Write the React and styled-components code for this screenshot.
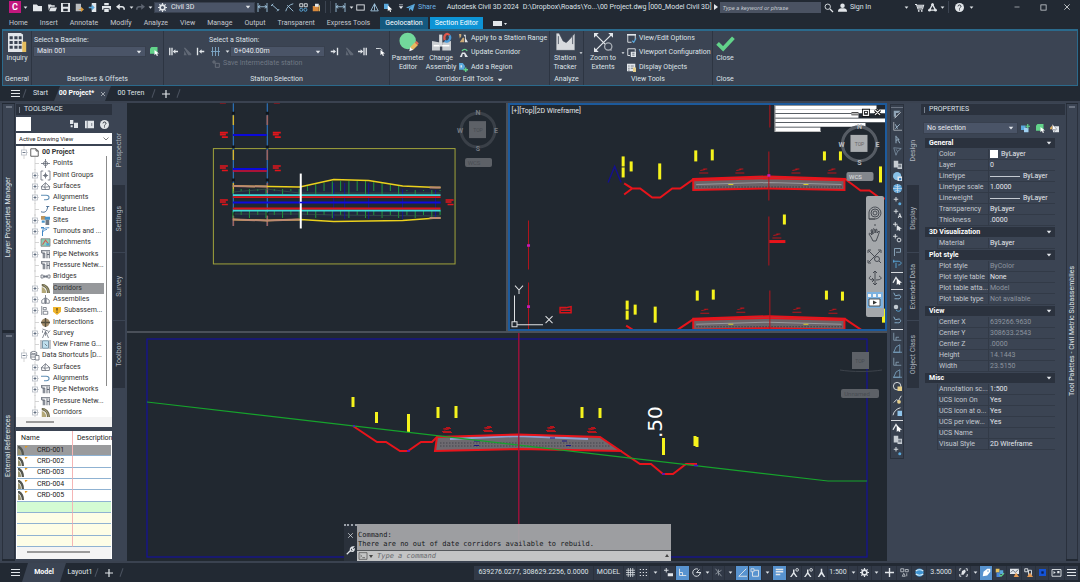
import styled, { createGlobalStyle, css } from "styled-components";
import { useState } from "react";

const GlobalStyle = createGlobalStyle`
  * { box-sizing: border-box; }
  body { margin: 0; background: #222933; overflow: hidden; }
  body, button, input, select, table {
    font-family: Roboto, "Open Sans", sans-serif;
    font-size: 7px;
    line-height: 9px;
    color: #dfe3e8;
  }
  button, input, select {
    border: 0;
    padding: 0;
    margin: 0;
    background: none;
    border-radius: 0;
  }
  select { appearance: none; }
`;

/* ---------- icons ---------- */

const Svg = styled.svg`
  display: block;
  flex: none;
  overflow: visible;
`;

const W = "#e2e6ea";
const B = "#5aa9dd";
const G = "#62d38a";
const D = "#5d6470";
const L = { fill: "none", stroke: W, strokeWidth: 1.2 };
const K = { fill: "none", stroke: D, strokeWidth: 1 };

const icons = {
  menu: <path d="M0 2h12M0 6h12M0 10h12" {...L} strokeWidth="1.6" />,
  plus: <path d="M6 0v12M0 6h12" {...L} strokeWidth="1.8" />,
  close: <path d="M2 2l8 8M10 2l-8 8" {...L} />,
  min: <path d="M1 6h10" {...L} />,
  max: <rect x="1.5" y="1.5" width="9" height="9" {...L} />,
  caret: <path d="M1.500 3.500h9L6 9z" fill={W} />,
  newFile: <path d="M0 2h5l2 2h5v7H0z" fill={W} />,
  open: <path d="M0 2h4l1 1h4v2H3L1 10zM3.5 6H12l-2 5H1.5z" fill={W} />,
  save: <path d="M0 0h12v12H0zM2.500 1v4h7V1zM3 7.500v3.500h6V7.500z" fill={W} fillRule="evenodd" />,
  saveAs: <><path d="M1 1h7v10H1z" fill="#b9bcbe" /><path d="M5 8h3V5l4 3.500L8 12V9H5z" fill="#d99b3c" /></>,
  exportDoc: <><path d="M5 0h6v12H5z" fill={W} /><path d="M1 5h4V2l4 4-4 4V7H1z" fill={B} /></>,
  print: <><path d="M3 0h6v3H3zM0 4h12v5h-2V7H2v2H0z" fill={W} /><path d="M3 8h6v4H3z" fill={W} /></>,
  undo: <><path d="M0 5l5-4v8z" fill={W} /><path d="M4 5h4c2 0 3 1 3 4" fill="none" stroke={W} strokeWidth="2" /></>,
  redo: <><path d="M12 5L7 1v8z" fill={D} /><path d="M8 5H4C2 5 1 6 1 9" fill="none" stroke={D} strokeWidth="2" /></>,
  gear: <><circle cx="6" cy="6" r="3.200" fill="none" stroke={W} strokeWidth="2.200" /><path d="M6 0v2.500M6 9.500V12M0 6h2.500M9.500 6H12M1.800 1.800l1.700 1.700M8.500 8.500l1.700 1.700M10.200 1.800L8.500 3.500M3.500 8.500l-1.700 1.700" stroke={W} strokeWidth="1.600" /></>,
  dimH: <path d="M0 0v12M12 0v12M0 5h12M3 3L0 5l3 2M9 3l3 2-3 2" {...L} stroke="#9fc4de" />,
  dimD: <path d="M1 2l9 8M0 4l3-3M8 11l3-3" {...L} stroke="#9fc4de" />,
  arc: <path d="M1 11C2 6 6 2 11 1M3 3l8 8" {...L} stroke="#9fc4de" />,
  link: <><path d="M1 1h4v4H1zM7 1h4v4H7z" {...L} stroke={W} /><circle cx="3" cy="9" r="2" {...L} stroke={B} /><circle cx="8.500" cy="9" r="2" {...L} stroke={B} /></>,
  pack: <><path d="M1 4h8v7H1z" fill="#d8893c" /><path d="M4 1h5v4H4z" fill={W} /><path d="M10 3v8" {...L} stroke="#e9c66a" /></>,
  rect: <rect x="1" y="2.500" width="10" height="7" {...L} />,
  warn: <path d="M6 1l5 9.500H1zM6 1v9" {...L} stroke="#9fc4de" />,
  pick: <><path d="M0 1h6v7H0z" fill={B} /><path d="M5 3v8l2-2 1 3 1.500-.5-1-3H11z" fill="#fff" /></>,
  caretBar: <><path d="M2 1.500h8" {...L} /><path d="M1.500 4.500h9L6 10z" fill={W} /></>,
  plane: <path d="M0 6l12-5-3 10-3-3-2 3V7l5-4-6 4z" fill={B} />,
  search: <><circle cx="5" cy="5" r="3.600" {...L} /><path d="M8 8l4 4" {...L} strokeWidth="1.600" /></>,
  person: <><circle cx="6" cy="3.500" r="3" fill={W} /><path d="M0 11.500c0-4 3-4.500 6-4.500s6 .5 6 4.500z" fill={W} /></>,
  cart: <><path d="M0 2h2l2 6h6l1.500-5H3" fill="none" stroke={W} strokeWidth="1.400" /><path d="M3 3h8l-1 4H4z" fill="#b8bcc2" /><circle cx="5" cy="10.500" r="1.200" fill={W} /><circle cx="9" cy="10.500" r="1.200" fill={W} /></>,
  appStore: <><path d="M6 2L2 9.500h8z" fill="none" stroke={W} strokeWidth="1.800" /><circle cx="6" cy="2" r="1.800" fill={W} /><circle cx="2" cy="9.500" r="1.800" fill={W} /><circle cx="10" cy="9.500" r="1.800" fill={W} /></>,
  help: <><circle cx="6" cy="6" r="6" fill={W} /><path d="M4 4.500C4 2 8 2 8 4.500 8 6 6 6 6 7.500M6 8.500V10" fill="none" stroke="#222933" strokeWidth="1.200" /></>,
  inquiry: <><path d="M0 0h8l1.500 1v11H0z" fill={W} /><path d="M1 2h2v2H1zM4 2h2v2H4zM6.800 2h1.800v2H6.800zM1 5h2v2H1zM4 5h2v2H4zM6.800 5h1.800v2H6.800zM1 8h2v2H1zM4 8h2v2H4zM6.800 8h1.800v2H6.800z" fill="#3b4453" /><path d="M9 5.500h2.500V12H9z" fill="#e6bd5c" /></>,
  greenPick: <><path d="M0 2l2-2h8v7l-2 2H0z" fill={G} /><path d="M6 4v7l2-2 1 3 1.500-.5-1-3H12z" fill="#fff" /></>,
  first: <><path d="M1 1v10M4 1v10" {...L} strokeWidth="1.800" /><path d="M5 6l3.500-3v2H12v2H8.500v2z" fill={W} /></>,
  wedge: <path d="M1 1h2l8 8v2H7zM2 5l3 6H1z" fill="#616976" />,
  prev: <><path d="M2 1v10" {...L} strokeWidth="1.800" /><path d="M4 6l3.500-3v2H11v2H7.500v2z" fill={W} /></>,
  next: <><path d="M10 1v10" {...L} strokeWidth="1.800" /><path d="M8 6L4.500 3v2H1v2h3.500v2z" fill={W} /></>,
  last: <><path d="M8 1v10M11 1v10" {...L} strokeWidth="1.800" /><path d="M7 6L3.500 3v2H0v2h3.500v2z" fill={W} /></>,
  stations: <path d="M2 0v12M6 0v12M10 0v12M0 6h12" {...L} stroke="#7fa9c9" />,
  curvePick: <><path d="M0 2h5c2 0 3 1 3 3" {...L} /><path d="M6 4v7l2-2 1 3 1.500-.5-1-3H12z" fill="#fff" /></>,
  addStation: <><path d="M3 0v6M0 3h6" {...K} stroke="#7b828d" /><path d="M5 5h6v6H5z" {...K} stroke="#7b828d" /></>,
  param: <><circle cx="5.500" cy="5" r="5.200" fill="#72d89b" /><path d="M7 9l3-3 2 1.500-3 3z" fill="#e9b960" /><path d="M7 9l2 1.500-2.500 1z" fill="#fff" /><path d="M10 6l1-1 1.500 1.500-.8 1z" fill="#e06b52" /></>,
  assembly: <><path d="M0 5l5 1v5H0zM6.500 6L12 5v6H6.500z" fill="#c9cdd1" /><path d="M1 8h10" stroke="#fff" /><path d="M4.500 1h2v7h-2z" fill="#d4d7da" /><path d="M8 4.500c-1-3.500 2-5 3-3" fill="none" stroke="#e0564b" strokeWidth="1.400" /><path d="M11 1.500c1.500 2-1 5-3 3.500" fill="none" stroke="#4a9bd8" strokeWidth="1.400" /></>,
  applyRange: <><path d="M0 0h3v3L1 6zM5 5h2v6H1z" fill="#cba976" /><path d="M6 1l2 3v7h4l-3-5V1z" fill={W} /></>,
  update: <><path d="M1 12l3-6h4l4 6H8L7 8H5l-1 4z" fill={W} /><path d="M4 4c2-3 5-3 7 0" fill="none" stroke={G} strokeWidth="1.800" /></>,
  addRegion: <><path d="M0 0h5l3 4-1 5H0z" fill={B} /><path d="M2 3h2v3H2z" fill={W} /><path d="M9 6v6M6 9h6" stroke={G} strokeWidth="1.800" /></>,
  tracker: <path d="M0 0h2l2.500 5L6.500 6l2-2L12 0v11H0zM1.500 2v5M10.500 2v5" fill="#d7dade" stroke="#3b4453" strokeWidth=".5" />,
  extents: <><path d="M1 1l10 10M11 1L1 11" {...L} strokeWidth=".8" /><path d="M0 0h3L0 3zM12 0v3L9 0zM0 12V9l3 3z" fill={W} /><circle cx="9" cy="8.500" r="2.300" fill="#3b4453" stroke="#aab0b8" strokeWidth=".8" /></>,
  viewEdit: <><path d="M1 1h10v7M1 1v10h5" {...L} /><path d="M0 0h12v2H0z" fill={W} /><path d="M7 9l2 2 3-5" fill="none" stroke={B} strokeWidth="1.600" /></>,
  viewport: <><path d="M1 1h10v4M1 1v9h3" {...L} /><path d="M5 5h7v7H5z" fill={W} /><path d="M7 7h3M7 9.500h3" stroke="#3b4453" /></>,
  display: <><path d="M0 1h11v10H0z" fill={W} /><path d="M1.500 4h2M5 4h4M1.500 7h2M5 7h3M1.500 9.500h2" stroke="#555d69" /><path d="M8 6h4v6H8z" fill="#e7cf8a" /></>,
  check: <path d="M1 6.500l3.500 3.500L11 3" fill="none" stroke={G} strokeWidth="2.400" />,
  panelA: <path d="M0 0h5v6H0zM6 4h6v8H6zM1 8h3v3H1z" fill={W} />,
  panelB: <><path d="M0 1h12v10H0z" fill={W} /><path d="M3 1v10M9 4v4" stroke="#3b4453" strokeWidth=".8" /></>,
  tagPick: <><path d="M0 2h6v6H0z" fill={B} /><path d="M4 5h6v6H4z" fill="#9fd0f2" /><path d="M9 0v6M6 3h6" stroke={G} strokeWidth="1.600" /></>,
  flash: <><path d="M4 3h8v8H4z" fill={W} /><path d="M3 0v9l2-2 1 3 1-1-1-2h3z" fill="#fff" stroke="#3b4453" strokeWidth=".5" /><path d="M0 5l3-3v5H0z" fill="#d8a95c" /></>,
  snapGrid: <path d="M3 0v12M6 0v12M9 0v12M0 3h12M0 6h12M0 9h12" {...L} strokeWidth="1" />,
  dots: <path d="M1 2h10M1 6h10M1 10h10" stroke={W} strokeWidth="1.600" strokeDasharray="1.6 2.4" />,
  dyn: <><path d="M3 0v6M0 3h6" {...L} /><path d="M5 7h7v4H5z" fill={W} /></>,
  ortho: <path d="M2 1v9h9M2 6h4v4" {...L} />,
  polar: <><path d="M11 6a5 5 0 1 1-3-4.500M6 6h6M6 6l4-4" {...L} /></>,
  iso: <path d="M2 1l8 10M6 2v8M2 8l8-5" {...L} stroke="#8f969f" />,
  angle: <path d="M11 1L1 11h11" {...L} />,
  osnap: <><path d="M2 3h8v8H2z" {...L} /><path d="M0 1h4v4H0z" fill="#5893cf" stroke={W} /></>,
  lines: <path d="M1 2h10M1 5h10M1 8.500h6" {...L} strokeWidth="2" />,
  anno: <path d="M5 1v4l-4 7h2l3-4 3 4h2L7 5V1z" fill={W} />,
  annoStar: <><path d="M4 2v4l-4 6h2l3-4 3 4h2L6 6V2z" fill={W} /><circle cx="9.500" cy="2.500" r="1.800" {...L} /></>,
  units: <path d="M1 1h4v4H1zM7 2h4v3H7zM3 11l2-4 2 4zM9 7v4" {...L} stroke="#b5bbc3" />,
  globe: <><circle cx="6" cy="6" r="5.500" fill="#3f94d2" /><path d="M1 4c3-2 7-2 10 0M1 8c3 2 7 2 10 0" fill="none" stroke="#d5ecf9" strokeWidth="1.600" /></>,
  tagBox: <><path d="M3 1H1v3M9 1h2v3M3 11H1V8M11 8v3H9" {...L} /><path d="M3 9l1-5 4-2 1 3-3 4z" fill={W} /></>,
  tag: <><path d="M1 11l1-6 5-4h4v4L7 10z" fill="#fff" /><circle cx="8" cy="4" r="1" fill="#5893cf" /></>,
  cubes: <><path d="M1 1h5v5H1z" fill="#e5c15d" /><path d="M6 3h5v5H6z" fill={B} /><path d="M2 6h5v6H2z" fill="#4b86d6" /><path d="M6 9l2 2 4-4" fill="none" stroke={G} strokeWidth="1.500" /></>,
  chart: <><path d="M0 1h12v7H0z" fill={W} /><path d="M1 6l3-3 3 3 4-4" fill="none" stroke="#3b4453" /><path d="M8 6l4 6H5z" fill="#e59a52" /></>,
  caution: <><path d="M1 1h4v4H1zM6 3h4v6H6z" {...L} /><path d="M8 6l4 6H4z" fill="#e59a52" /></>,
  square: <><path d="M0 0h12v12H0z" fill="#1453d6" /><path d="M4 4h4v4H4z" fill="#0c1e4c" /></>,
  screen: <><path d="M0 2h12v9H0z" {...L} /><path d="M2 4l3 2-3 2zM7 4h3v3H7z" fill={W} /></>,
  wrench: <path d="M1 11l5-5M6 6c-1-3 1-5 4-5L8 3l1 2 2-1c0 3-2 4-5 2z" fill="none" stroke={W} strokeWidth="1.600" />,
  prompt: <><path d="M0 1h12v10H0z" fill="none" stroke="#444" /><path d="M2 4l2 2-2 2M5 8.500h4" fill="none" stroke="#444" /></>,
  /* prospector tree */
  folder: <path d="M1 1h7l3 3v7H1zM8 1v3h3" {...K} stroke="#333" />,
  points: <><path d="M6 0v12M0 6h12" {...K} /><circle cx="6" cy="6" r="2.800" {...K} /></>,
  pointGroups: <><path d="M3 0H0v12h3M9 0h3v12H9M6 2v8M2.500 6h7" {...K} /><circle cx="6" cy="6" r="1.800" {...K} /></>,
  surfaces: <path d="M1 10l-.5-4L6 1l5.500 5-.5 4zM.5 6l5 1 6-1M6 1l-1 6 1 3" {...K} />,
  alignments: <path d="M0 3h7c5 0 5 6 0 6H4" fill="none" stroke="#5f8fb5" strokeWidth="1.400" />,
  feature: <path d="M0 9c6 2 8-1 9-7M7 2h4" {...K} stroke="#4b6f94" strokeWidth="1.300" />,
  sites: <><path d="M0 0h6v5H0z" fill="#bd955c" /><path d="M5 1h7v4H5zM1 6h4v3H1z" fill="#4794cb" /><path d="M6 5h5v7H6z" fill="#6e7883" /></>,
  turnouts: <><path d="M2 12V5c0-3 4-4 9-4M2 7c1-3 4-3 6-4" fill="none" stroke="#3f86c5" strokeWidth="1.300" /><path d="M0 0h4v2H0z" fill="#3f86c5" /></>,
  catchments: <><path d="M0 1h12v10H0z" fill="#8ccfb7" stroke="#777" /><path d="M2 9l4-6 4 5" fill="none" stroke="#d35b52" strokeWidth="1.500" /><path d="M7 7h4v3H7z" fill="#4aa2d8" /></>,
  pipes: <path d="M0 1h12M1 1v3h4v7M3 4v7M8 2v9M11 2v9M8 6h3" {...K} strokeWidth="1.300" />,
  bridges: <path d="M0 4h3v4H0zM9 4h3v4H9zM3 6h6M5 4v4M7 4v4" {...K} />,
  corridors: <><path d="M1 0h3c5 2 8 6 8 12H8C8 6 5 4 1 3z" fill="#6f6b52" /><path d="M1 4c4 1 6 4 6 8H1z" fill="#b3a878" /><path d="M3 1c4 2 7 6 7 11" fill="none" stroke="#e8e0a0" strokeWidth=".6" /></>,
  assemblies: <path d="M6 0v12M5 4L1 7v4h4zM7 4l4 3v4H7z" {...K} />,
  subassembly: <path d="M1 0v12M3 2h4v3H3zM3 7h6v4H3z" {...K} />,
  shield: <><path d="M0 0h12v7l-6 5-6-5z" fill="#f0b429" /><path d="M6 1.500v4M6 7v1.500" stroke="#222" strokeWidth="1.500" /></>,
  intersections: <><circle cx="6" cy="6" r="5.500" fill="#a58d6b" /><path d="M6 0v12M0 6h12" stroke="#55503f" strokeWidth="1.800" /></>,
  survey: <path d="M2 0l8 3M6 3L2 12M6 3l4 9M6 4v5M2 2v3M9 6l3-4" {...K} />,
  viewFrame: <><path d="M2 1h8v10H2z" fill="#bfe0ef" stroke="#58788d" /><path d="M0 0v12M12 0v12M5 5l3 3" {...K} /></>,
  database: <><path d="M1 2v8c2 2 6 2 8 0V2M1 5h8M1 8h8" {...K} /><path d="M1 2c2-2 6-2 8 0-2 2-6 2-8 0M7 6h5v6H7z" {...K} fill="#fff" /></>,
  roadTag: <><path d="M0 0h2c4 2 6 6 6 12H5C5 7 3 4 0 3z" fill="#55574f" /><path d="M0 4c3 1 4 4 4 8H0z" fill="#9b9572" /><path d="M9 0h4l-3 3z" fill="#e09a22" /></>,
  /* transparent command strip */
  cmdA: <><path d="M1 1h9L7 4H4v5H1z" fill="#8fa3b5" /><path d="M2 11l8-8" {...L} /></>,
  cmdB: <><path d="M1 0v11h11" {...L} strokeWidth=".8" /><path d="M3 9l6-6M3 3l3 6" {...L} stroke="#9eb8cc" /></>,
  cmdC: <path d="M4 1v10M4 2l4 4-4 1M7 7l2 4" {...L} stroke="#9eb8cc" />,
  cmdD: <path d="M1 1l10 1-5 4-2 5zM6 6L4 3" {...K} stroke="#8295a8" />,
  cmdE: <><path d="M1 1h6v9H1zM6 5h6v7H6z" fill="#c6ccd2" /><path d="M7 7h4M7 9h4" stroke="#3b4453" /></>,
  cmdF: <><circle cx="5.500" cy="5.500" r="5.500" fill="#88c1e8" /><path d="M6 6h6v6H6z" fill={W} /><path d="M8 8h3v3H8z" fill="#3f86c5" /></>,
  cmdG: <><circle cx="6" cy="6" r="6" fill="#5aa4da" /><path d="M6 0v12M0 6h12M2 2c3 2 5 2 8 0M2 10c3-2 5-2 8 0" {...L} strokeWidth=".8" /></>,
  cmdH: <><path d="M4 0v6M1 3h6" {...L} /><circle cx="9" cy="9" r="2" fill={B} /></>,
  cmdI: <path d="M4 0v6M1 3h6M7 12l2-6 2 6M8 10h3" {...L} />,
  cmdJ: <><path d="M3 0v6M0 3h6" {...L} /><path d="M5 4v8l2-2 1 2 2-1-1-2h3z" fill={W} /></>,
  cmdK: <><path d="M3 0v6M0 3h6" {...L} /><circle cx="8" cy="8" r="2.500" {...L} /></>,
  cmdL: <path d="M2 12V2h8v5H4" {...L} stroke="#8fa9bd" />,
  cmdM: <path d="M0 3h7c5 0 5 5 0 5M4 5v7M1 1v4" {...L} stroke={B} />,
  cmdN: <><path d="M0 9l4-7 4 6" {...L} strokeWidth="1.800" /><path d="M5 3v9l2-2 1 2 2-1-1-2h3z" fill="#fff" /></>,
  cmdO: <path d="M1 1l2 4 5-1c4 1 2 6-2 5H2" {...L} stroke="#8db8d6" />,
  cmdP: <><circle cx="4" cy="4" r="3" fill="#c3cad1" /><path d="M4 8c4 4 8 0 6-3" {...L} stroke={B} /></>,
  cmdQ: <path d="M1 1v10h10M4 11V7h4" {...L} stroke="#8fa9bd" strokeWidth="1" />,
  cmdR: <path d="M1 11L4 4l5-3v10zM0 11h12" {...L} stroke="#7fa9c9" strokeWidth="1" />,
  cmdS: <><circle cx="5.500" cy="5.500" r="5" {...L} /><path d="M6 6h6v6H6z" fill="#e7cf8a" /></>,
  cmdT: <><path d="M1 10l4-4 2 2 4-7" {...L} /><circle cx="8" cy="9" r="2.500" fill="#e7cf8a" /></>,
  cmdU: <><path d="M0 11C1 6 5 2 10 1" {...L} /><path d="M6 5h6v7H6z" fill="#8fc4ea" /></>,
};

function Icon({ name, size = 10 }) {
  return (
    <Svg width={size} height={size} viewBox="0 0 12 12" aria-hidden="true">
      {icons[name]}
    </Svg>
  );
}

/* ---------- shared parts ---------- */

const Tool = styled.button`
  display: flex;
  align-items: center;
  justify-content: center;
  flex: none;
  width: ${(p) => p.$w || 14}px;
  height: ${(p) => p.$h || 14}px;
  white-space: nowrap;
  background: ${(p) => (p.$on ? "#5893cf" : "none")};
`;

const SelectBox = styled.label`
  position: relative;
  display: flex;
  align-items: center;
  flex: none;
  gap: 4px;
  width: ${(p) => (p.$w ? `${p.$w}px` : "auto")};
  height: ${(p) => p.$h || 11}px;
  padding: 0 3px;
  background: ${(p) => (p.$light ? "#fff" : "#4a5467")};
  border: ${(p) => (p.$light ? 0 : 1)}px solid #38404e;

  select {
    flex: 1;
    min-width: 0;
    height: 9px;
    font-size: ${(p) => (p.$light ? 6 : 7)}px;
    color: ${(p) => (p.$light ? "#222" : "#e6e9ed")};
    outline: 0;
  }
`;

function Select({ label, value, icon, light, ...rest }) {
  return (
    <SelectBox $light={light} {...rest}>
      {icon && <Icon name={icon} size={9} />}
      <select aria-label={label} defaultValue={value}>
        <option>{value}</option>
      </select>
      {light ? (
        <Svg width="6" height="6" viewBox="0 0 12 12">
          <path d="M1 3l5 5 5-5" fill="none" stroke="#555" strokeWidth="1.500" />
        </Svg>
      ) : (
        <Icon name="caret" size={6} />
      )}
    </SelectBox>
  );
}

const Slash = styled.span`
  width: 1px;
  height: 9px;
  flex: none;
  margin: 0 2px;
  background: #4a525f;
  transform: rotate(20deg);
`;

const Divider = styled.span`
  width: 1px;
  height: 12px;
  margin: 0 2px;
  flex: none;
  background: #3c4451;
`;

const Page = styled.div`
  display: grid;
  grid-template-rows: 16px 13px 57px 17px 1fr 21px;
  height: 100vh;
  background: #222933;
`;

/* ---------- title bar ---------- */

const TitleBar = styled.header`
  display: flex;
  align-items: center;
  padding: 0 2px 2px 9px;
  white-space: nowrap;
`;

const Logo = styled.button`
  width: 12px;
  height: 12px;
  background: #c2187e;
  color: #fff;
  font-size: 9px;
  font-weight: 700;
`;

const DocTitle = styled.h1`
  display: flex;
  gap: 4px;
  margin: 0 0 0 11px;
  font-size: 7px;
  font-weight: 400;
`;

const SearchInput = styled.input`
  width: 101px;
  height: 11px;
  padding: 0 2px;
  background: #4a5262;
  font-size: 6px;
  font-style: italic;

  &::placeholder {
    color: #c3c8cf;
  }
`;

const Spring = styled.span`
  flex: 1;
`;

const Share = styled.a`
  display: flex;
  align-items: center;
  gap: 3px;
  color: #6eb3e2;
  text-decoration: none;
`;

function Tools({ items, h }) {
  return items.map(([name, w, on, size], i) => (
    <Tool key={i} $w={w} $h={h} $on={on} aria-label={name}>
      <Icon name={name} size={size || (name === "caret" ? 5 : 9)} />
    </Tool>
  ));
}

function TopBar() {
  return (
    <TitleBar>
      <Logo>C</Logo>
      <Tools
        items={[
          ["caret", 9], ["newFile", 15], ["open", 14], ["save", 13], ["saveAs", 14],
          ["exportDoc", 13], ["print", 14], ["undo", 14], ["caret", 8],
          ["redo", 11], ["caret", 8],
        ]}
      />
      <Select label="Workspace" value="Civil 3D" icon="gear" $w={101} />
      <Tools items={[["dimH", 14], ["dimD", 13], ["arc", 14], ["link", 14], ["pack", 13]]} />
      <Divider />
      <Divider />
      <Tools items={[["dimH", 15], ["caret", 6], ["rect", 13], ["warn", 14], ["pick", 15], ["caretBar", 10, 0, 6]]} />
      <Share href="#share">
        <Icon name="plane" size={9} />
        Share
      </Share>
      <DocTitle>
        <span>Autodesk Civil 3D 2024</span>
        <span>D:\Dropbox\Roads\Yo...\00 Project.dwg [000_Model Civil 3D]</span>
      </DocTitle>
      <Tool $w={9} aria-label="Expand search">
        <Svg width="4" height="6" viewBox="0 0 4 6">
          <path d="M0 0l4 3-4 3z" fill={W} />
        </Svg>
      </Tool>
      <SearchInput aria-label="Search" placeholder="Type a keyword or phrase" />
      <Tools items={[["search", 15], ["person", 13]]} />
      <Tool $w={22}>Sign In</Tool>
      <Spring />
      <Tools items={[["caret", 12], ["cart", 14], ["appStore", 12], ["caret", 8]]} />
      <Divider />
      <Tools items={[["help", 16], ["caret", 8]]} />
      <Spring />
      <Tools items={[["min", 26, 0, 6], ["max", 26, 0, 7], ["close", 22, 0, 8]]} />
    </TitleBar>
  );
}

/* ---------- ribbon ---------- */

const TabRow = styled.nav`
  display: flex;
  align-items: flex-end;
  padding-left: 3px;
`;

const RibbonTab = styled.button`
  height: 12px;
  padding: 0 6px;
  white-space: nowrap;
  color: #c3c8cf;

  ${(p) =>
    p.$kind &&
    css`
      margin-left: ${p.$kind === "active" ? 2 : 4}px;
      padding: 0 5px;
      color: #fff;
      background: ${p.$kind === "active" ? "#0d94d6" : "#14597f"};
    `}
`;

const RibbonBody = styled.section`
  display: grid;
  grid-template-columns: 29px 132px 226px 160px 34px 129px 1fr;
  margin: 0 2px;
  background: #3b4453;
  border: 1px solid #2b6a8c;
  border-top-width: 2px;
`;

const RibbonPanel = styled.div`
  position: relative;
  display: flex;
  flex-direction: column;
  justify-content: space-between;
  min-width: 0;
  border-right: 1px solid #2d3542;

  &:last-child {
    border-right: 0;
  }
`;

const PanelBody = styled.div`
  display: flex;
  flex-direction: ${(p) => (p.$column ? "column" : "row")};
  gap: ${(p) => p.$gap || 0}px;
  padding: 2px 1px 0;
`;

const PanelTitle = styled.div`
  display: flex;
  align-items: center;
  justify-content: center;
  gap: 4px;
  width: ${(p) => (p.$w ? `${p.$w}px` : "auto")};
  height: 11px;
`;

const BigButton = styled.button`
  display: flex;
  flex-direction: column;
  align-items: center;
  gap: 2px;
  width: ${(p) => p.$w || 31}px;
  text-align: center;
  white-space: pre-line;
`;

const IconList = styled.div`
  display: grid;
  gap: 4px;
  padding-left: 2px;
`;

const ListButton = styled.button`
  display: flex;
  align-items: center;
  gap: 3px;
  height: 9px;
  margin-top: 1px;
  white-space: nowrap;
  color: ${(p) => (p.$dim ? "#6f7783" : "#dfe3e8")};
`;

const ToolRow = styled.div`
  display: flex;
  align-items: center;
`;

const FieldLabel = styled.div`
  padding: ${(p) => (p.$inset ? "3px 0 0 44px" : "3px 0 0 1px")};
`;

const Indent = styled.div`
  padding-left: 47px;
`;

const tabs = [
  "Home", "Insert", "Annotate", "Modify", "Analyze", "View", "Manage",
  "Output", "Transparent", "Express Tools",
];

function Big({ icon, text, w, size = 19, caret }) {
  return (
    <ToolRow>
      <BigButton $w={w}>
        <Icon name={icon} size={size} />
        {text}
      </BigButton>
      {caret && <Icon name="caret" size={4} />}
    </ToolRow>
  );
}

function Ribbon() {
  return (
    <>
      <TabRow>
        {tabs.map((t) => (
          <RibbonTab key={t}>{t}</RibbonTab>
        ))}
        <RibbonTab $kind="context">Geolocation</RibbonTab>
        <RibbonTab $kind="active">Section Editor</RibbonTab>
        <Tool $w={34} $h={12} aria-label="Minimize ribbon">
          <Svg width="14" height="5" viewBox="0 0 14 5">
            <path d="M0 0h9v5H0zM11 2h3l-1.500 2z" fill={W} />
          </Svg>
        </Tool>
      </TabRow>
      <RibbonBody>
        <RibbonPanel>
          <PanelBody>
            <Big icon="inquiry" text="Inquiry" w={26} />
          </PanelBody>
          <PanelTitle>General</PanelTitle>
        </RibbonPanel>
        <RibbonPanel>
          <PanelBody $column $gap={1}>
            <FieldLabel>Select a Baseline:</FieldLabel>
            <ToolRow>
              <Select label="Baseline" value="Main 001" $w={113} />
              <Tools items={[["greenPick", 17]]} h={11} />
            </ToolRow>
          </PanelBody>
          <PanelTitle>Baselines & Offsets</PanelTitle>
        </RibbonPanel>
        <RibbonPanel>
          <PanelBody $column $gap={1}>
            <FieldLabel $inset>Select a Station:</FieldLabel>
            <ToolRow>
              <Tools items={[["first", 16], ["wedge", 12], ["prev", 14], ["stations", 17], ["caret", 6]]} h={11} />
              <Select label="Station" value="0+040.00m" $w={95} />
              <Tools items={[["next", 18], ["wedge", 12], ["last", 15], ["curvePick", 20]]} h={11} />
            </ToolRow>
            <Indent>
              <ListButton $dim>
                <Icon name="addStation" size={8} />
                Save Intermediate station
              </ListButton>
            </Indent>
          </PanelBody>
          <PanelTitle>Station Selection</PanelTitle>
        </RibbonPanel>
        <RibbonPanel>
          <PanelBody>
            <Big icon="param" text={"Parameter\nEditor"} w={34} />
            <Big icon="assembly" text={"Change\nAssembly"} w={32} />
            <IconList>
              <ListButton><Icon name="applyRange" size={9} />Apply to a Station Range</ListButton>
              <ListButton><Icon name="update" size={9} />Update Corridor</ListButton>
              <ListButton><Icon name="addRegion" size={9} />Add a Region</ListButton>
            </IconList>
          </PanelBody>
          <PanelTitle>
            Corridor Edit Tools <Icon name="caret" size={6} />
          </PanelTitle>
        </RibbonPanel>
        <RibbonPanel>
          <PanelBody>
            <Big icon="tracker" text={"Station\nTracker"} w={28} caret />
          </PanelBody>
          <PanelTitle>Analyze</PanelTitle>
        </RibbonPanel>
        <RibbonPanel>
          <PanelBody>
            <Big icon="extents" text={"Zoom to\nExtents"} w={36} caret />
            <IconList>
              <ListButton><Icon name="viewEdit" size={9} />View/Edit Options</ListButton>
              <ListButton><Icon name="viewport" size={9} />Viewport Configuration</ListButton>
              <ListButton><Icon name="display" size={9} />Display Objects</ListButton>
            </IconList>
          </PanelBody>
          <PanelTitle>View Tools</PanelTitle>
        </RibbonPanel>
        <RibbonPanel>
          <PanelBody>
            <Big icon="check" text="Close" w={22} />
          </PanelBody>
          <PanelTitle $w={24}>Close</PanelTitle>
        </RibbonPanel>
      </RibbonBody>
    </>
  );
}

/* ---------- file tabs ---------- */

const FileTabs = styled.nav`
  display: flex;
  align-items: center;
  padding-left: 8px;
  border-bottom: 2px solid #3a4250;
`;

const FileTab = styled.button`
  display: flex;
  align-items: center;
  justify-content: center;
  gap: 6px;
  align-self: stretch;
  flex: none;
  width: ${(p) => p.$w}px;
  white-space: nowrap;

  ${(p) =>
    p.$active &&
    css`
      background: #3b4453;
      color: #fff;
      font-weight: 700;
      clip-path: polygon(6px 0, 100% 0, calc(100% - 6px) 100%, 0 100%);
    `}
`;

/* ---------- side palettes ---------- */

const Main = styled.main`
  display: grid;
  grid-template-columns: 13px 98px 13px minmax(0, 1fr) 20px 13px 146px 12px;
  min-height: 0;
  padding: 0 2px;
  background: #3b4453;
`;

const Strip = styled.div`
  display: grid;
  grid-template-rows: ${(p) => p.$rows || "1fr"};
  gap: 3px;
  padding: 1px 0 2px;
  background: #222933;
  min-height: 0;
`;

const StripButton = styled.button`
  position: relative;
  display: flex;
  align-items: center;
  justify-content: center;
  background: #3b4453;
  border: solid #2a313d;
  border-width: 0 1px;

  &::before {
    content: "";
    position: absolute;
    top: 2px;
    width: 6px;
    height: 2px;
    background: #6a7280;
  }
`;

const Vertical = styled.span`
  writing-mode: vertical-rl;
  transform: rotate(180deg);
  white-space: nowrap;
`;

const SideTabs = styled.div`
  display: grid;
  grid-auto-rows: 68px;
  align-content: start;
  padding: 14px 1px 0 0;
`;

const SideTab = styled.button`
  display: flex;
  align-items: center;
  justify-content: center;
  color: #aeb4be;
  border-bottom: 1px solid #3b4453;
  background: ${(p) => (p.$active ? "#3b4453" : "#2b323e")};
`;

const Palette = styled.aside`
  display: flex;
  flex-direction: column;
  min-width: 0;
  min-height: 0;
  padding: 1px 1px 2px;
  background: #3b4453;
`;

const PaletteTitle = styled.div`
  display: flex;
  align-items: center;
  gap: 4px;
  flex: none;
  height: 11px;
  padding-left: 3px;
  background: #2b323e;

  &::before {
    content: "";
    width: 1px;
    height: 6px;
    background: #77808d;
  }
`;

const PaletteTools = styled.div`
  display: flex;
  align-items: center;
  flex: none;
  height: 14px;
  margin: 2px 0;
`;

const WhiteTool = styled.button`
  width: 15px;
  height: 14px;
  margin-right: auto;
  background: #fff;
`;

const TreeBox = styled.div`
  display: flex;
  flex-direction: column;
  flex: 1;
  min-height: 0;
  margin: 2px 0 4px;
  background: #fff;
`;

const TreeClip = styled.div`
  position: relative;
  flex: 1;
  overflow: hidden;
`;

const Tree = styled.ul`
  display: grid;
  grid-template-rows: repeat(24, 1fr);
  height: 272px;
  margin: 0 8px 0 0;
  padding: 1px 0 0 5px;
  list-style: none;
`;

const TreeItem = styled.li`
  display: flex;
  align-items: center;
  gap: 3px;
  min-width: 0;
  padding-left: ${(p) => (p.$deep ? 11 : 0)}px;
  color: #333;
  font-weight: ${(p) => (p.$bold ? 700 : 400)};

  span {
    flex: 1;
    padding: 1px 0;
    white-space: nowrap;
    background: ${(p) => (p.$selected ? "#96989b" : "none")};
  }
`;

const VThumb = styled.div`
  position: absolute;
  top: 10px;
  right: 5px;
  width: 1px;
  height: 230px;
  background: #8b8b8b;
`;

const HTrack = styled.div`
  flex: none;
  height: ${(p) => p.$h}px;
  padding: 4px 0 0 10px;
  background: #f4f4f4;

  &::before {
    content: "";
    display: block;
    width: ${(p) => p.$w}px;
    height: 2px;
    background: #9a9a9a;
  }
`;

const ItemBox = styled.div`
  flex: none;
  padding: 0 1px;
  background: #fff;
`;

const ItemTable = styled.table`
  width: 100%;
  height: 116px;
  table-layout: fixed;
  border-spacing: 0;
  color: #222;

  th {
    height: 14px;
    padding: 0 4px;
    font-weight: 400;
    text-align: left;
  }
  th:first-child {
    width: 56px;
  }
  td {
    height: 11px;
    padding: 0;
    border-bottom: 1px solid #8fb2d2;
  }
  th:first-child, td:first-child {
    border-right: 1px solid #f5b5b5;
  }
`;

const ItemRow = styled.tr`
  background: ${(p) => p.$bg || "#fff"};
`;

const ItemName = styled.div`
  display: flex;
  align-items: center;
  gap: 10px;
  padding-left: 1px;
  height: 9px;
`;

const tree = [
  ["00 Project", "folder", "-", 0, "bold"],
  ["Points", "points", ""],
  ["Point Groups", "pointGroups", "+"],
  ["Surfaces", "surfaces", "+"],
  ["Alignments", "alignments", "+"],
  ["Feature Lines", "feature", ""],
  ["Sites", "sites", "+"],
  ["Turnouts and ...", "turnouts", "+"],
  ["Catchments", "catchments", ""],
  ["Pipe Networks", "pipes", "+"],
  ["Pressure Netw...", "pipes", ""],
  ["Bridges", "bridges", ""],
  ["Corridors", "corridors", "+"],
  ["Assemblies", "assemblies", "+"],
  ["Subassem...", "subassembly", "+"],
  ["Intersections", "intersections", ""],
  ["Survey", "survey", "+"],
  ["View Frame G...", "viewFrame", ""],
  ["Data Shortcuts [D...", "database", "-", 0],
  ["Surfaces", "surfaces", "+"],
  ["Alignments", "alignments", "+"],
  ["Pipe Networks", "pipes", "+"],
  ["Pressure Netw...", "pipes", ""],
  ["Corridors", "corridors", "+"],
];

function Expander({ sign }) {
  return (
    <Svg width="6" height="11" viewBox="0 0 6 11">
      <path d="M3 -1v13M3 5.500h4" stroke="#c3c3c3" strokeWidth=".7" />
      {sign && <rect x=".5" y="3" width="5" height="5" fill="#fff" stroke="#b3bac2" strokeWidth=".8" />}
      {sign && <path d={sign === "+" ? "M1.500 5.500h3M3 4v3" : "M1.500 5.500h3"} stroke="#4c5a70" strokeWidth=".8" />}
    </Svg>
  );
}

function Toolspace() {
  const [selected, setSelected] = useState(12);
  return (
    <Palette>
      <PaletteTitle>TOOLSPACE</PaletteTitle>
      <PaletteTools>
        <WhiteTool aria-label="Items" />
        <Tools items={[["panelA", 16, 0, 8], ["panelB", 15], ["help", 15]]} />
      </PaletteTools>
      <Select label="View" value="Active Drawing View" light />
      <TreeBox>
        <TreeClip>
          <Tree>
            {tree.map(([text, icon, sign, root, bold], i) => (
              <TreeItem
                key={i}
                $deep={root !== 0}
                $bold={bold}
                $selected={i === selected}
                onClick={() => setSelected(i)}
              >
                <Expander sign={sign} />
                <Icon name={icon} size={9} />
                {icon === "subassembly" && <Icon name="shield" size={8} />}
                <span>{text}</span>
              </TreeItem>
            ))}
          </Tree>
          <VThumb />
        </TreeClip>
        <HTrack $w={28} $h={10} />
      </TreeBox>
      <ItemBox>
        <ItemTable>
          <thead>
            <tr>
              <th>Name</th>
              <th>Description</th>
            </tr>
          </thead>
          <tbody>
            {["CRD-001", "CRD-002", "CRD-003", "CRD-004", "CRD-005"].map((n, i) => (
              <ItemRow key={n} $bg={i === 0 && "#9a9b9d"}>
                <td>
                  <ItemName>
                    <Icon name="roadTag" size={9} />
                    {n}
                  </ItemName>
                </td>
                <td />
              </ItemRow>
            ))}
            {["#d3fbd3", "#fdfde6", "#fdfde6", "#fdfde6"].map((c, i) => (
              <ItemRow key={i} $bg={c}>
                <td />
                <td />
              </ItemRow>
            ))}
          </tbody>
        </ItemTable>
        <HTrack $w={63} $h={12} />
      </ItemBox>
    </Palette>
  );
}

/* ---------- command strip ---------- */

const CommandStrip = styled.div`
  justify-self: center;
  align-self: start;
  width: 14px;
  margin-top: 1px;
  border: 1px solid #2a313d;
  background: #37404e;
`;

const StripGroup = styled.div`
  display: grid;
  grid-auto-rows: 1fr;
  height: ${(p) => p.$h}px;
  border-top: 1px solid ${(p) => (p.$first ? "#6a7280" : "#d6d9dd")};
  margin-top: 2px;
  justify-items: center;
  align-items: center;
`;

const groups = [
  [163, ["cmdA", "cmdB", "cmdC", "cmdD", "cmdE", "cmdF", "cmdG", "cmdH", "cmdI", "cmdJ", "cmdK", "cmdL", "cmdM"]],
  [15, ["cmdN"]],
  [38, ["cmdO", "cmdP", "cmdO"]],
  [89, ["cmdQ", "cmdR", "cmdQ", "cmdR", "cmdS", "cmdT", "cmdU"]],
  [38, ["cmdN", "cmdE", "cmdH"]],
];

/* ---------- properties ---------- */

const PropTools = styled.div`
  display: flex;
  align-items: center;
  padding: 7px 0 3px 2px;
`;

const PropList = styled.div`
  padding: 0 10px 0 4px;
`;

const PropHeader = styled.button`
  display: flex;
  align-items: center;
  justify-content: space-between;
  width: 100%;
  height: 10px;
  margin: 1px 0;
  padding: 0 3px 0 4px;
  background: #2b323e;
  color: #fff;
  font-weight: 700;
`;

const PropTable = styled.table`
  width: calc(100% - 12px);
  margin-left: 12px;
  table-layout: fixed;
  border-spacing: 0;
  border-left: 1px solid #323a47;

  th, td {
    height: 11px;
    padding: 0 0 0 1px;
    line-height: 10px;
    font-weight: 400;
    text-align: left;
    white-space: nowrap;
    overflow: hidden;
    border-bottom: 1px solid #323a47;
  }
  th {
    width: 51px;
    color: #c4c9d0;
    border-right: 1px solid #323a47;
  }
`;

const PropValue = styled.td`
  color: ${(p) => (p.$muted ? "#8d949f" : "#e6e9ed")};
`;

const ValueLine = styled.span`
  display: flex;
  align-items: center;
  gap: 3px;

  &::before {
    content: "";
    width: ${(p) => (p.$swatch ? 8 : 30)}px;
    height: ${(p) => (p.$swatch ? 8 : 1)}px;
    background: ${(p) => (p.$swatch ? "#fff" : "#c4c9d0")};
  }
`;

const properties = [
  ["General", [
    ["Color", "ByLayer", "swatch"], ["Layer", "0"], ["Linetype", "ByLayer", "line"],
    ["Linetype scale", "1.0000"], ["Lineweight", "ByLayer", "line"],
    ["Transparency", "ByLayer"], ["Thickness", ".0000"],
  ]],
  ["3D Visualization", [["Material", "ByLayer"]]],
  ["Plot style", [
    ["Plot style", "ByColor", "muted"], ["Plot style table", "None"],
    ["Plot table atta...", "Model", "muted"], ["Plot table type", "Not available", "muted"],
  ]],
  ["View", [
    ["Center X", "639266.9630", "muted"], ["Center Y", "308633.2543", "muted"],
    ["Center Z", ".0000", "muted"], ["Height", "14.1443", "muted"], ["Width", "23.5150", "muted"],
  ]],
  ["Misc", [
    ["Annotation sc...", "1:500"], ["UCS icon On", "Yes"], ["UCS icon at o...", "Yes"],
    ["UCS per view...", "Yes"], ["UCS Name", ""], ["Visual Style", "2D Wireframe"],
  ]],
];

function Properties() {
  return (
    <Palette>
      <PaletteTitle>PROPERTIES</PaletteTitle>
      <PropTools>
        <Select label="Selection" value="No selection" $w={95} $h={12} />
        <Tools items={[["tagPick", 15], ["greenPick", 14], ["flash", 14]]} h={12} />
      </PropTools>
      <PropList>
        {properties.map(([title, rows]) => (
          <section key={title}>
            <PropHeader>
              {title} <Icon name="caret" size={6} />
            </PropHeader>
            <PropTable>
              <tbody>
                {rows.map(([name, value, kind]) => (
                  <tr key={name}>
                    <th scope="row">{name}</th>
                    <PropValue $muted={kind === "muted"}>
                      {kind === "swatch" || kind === "line" ? (
                        <ValueLine $swatch={kind === "swatch"}>{value}</ValueLine>
                      ) : (
                        value
                      )}
                    </PropValue>
                  </tr>
                ))}
              </tbody>
            </PropTable>
          </section>
        ))}
      </PropList>
    </Palette>
  );
}

/* ---------- drawing area ---------- */

const Canvas = styled.div`
  display: grid;
  grid-template-columns: 380fr 379fr;
  grid-template-rows: 228fr 228fr;
  gap: 2px;
  min-height: 0;
  margin-left: 1px;
  background: #4a5059;
`;

const Viewport = styled.section`
  position: relative;
  min-width: 0;
  min-height: 0;
  grid-column: ${(p) => (p.$wide ? "1 / -1" : "auto")};
  background: #212830;
  border: ${(p) => (p.$current ? "2px solid #1c5a9c" : 0)};

  > svg {
    display: block;
    width: 100%;
    height: 100%;
    overflow: hidden;
  }
`;

const ViewLabel = styled.div`
  position: absolute;
  top: 2px;
  left: 1px;
  color: #e8eaec;
`;

const bars = (list) =>
  list.map(([x, y, y2], i) => (
    <rect key={i} x={x - 1.5} y={y} width="3" height={y2 - y} fill="#f6f31c" />
  ));

const notes = (list) =>
  list.map(([x, y], i) => (
    <path key={i} d={`M${x - 4} ${y}l5-1M${x - 1} ${y - 1.500}h4M${x - 5} ${y + 2.500}h9`} stroke="#b8141b" strokeWidth="1" />
  ));

function Tag({ x, y }) {
  return <path d={`M${x} ${y - 2}h8M${x} ${y}h6M${x + 2} ${y + 2.500}h6`} stroke="#e3151b" strokeWidth="1.600" />;
}

function Compass({ x, y, faint }) {
  const ink = faint ? "#747980" : "#b9bcc0";
  const letter = { fontSize: 7, fontWeight: 700, fill: ink, textAnchor: "middle" };
  return (
    <g>
      <circle cx={x} cy={y} r="17" fill="none" stroke={faint ? "#3a4048" : "#565c64"} strokeWidth="3" />
      <rect x={x - 9} y={y - 9} width="17" height="17" fill={faint ? "#5d6167" : "#aaadb0"} />
      <text x={x} y={y + 2} fontSize="5" fill={faint ? "#474b51" : "#666"} textAnchor="middle">TOP</text>
      <text x={x} y={y - 15} {...letter}>N</text>
      <text x={x} y={y + 21} {...letter}>S</text>
      <text x={x - 18} y={y + 3} {...letter}>W</text>
      <text x={x + 18} y={y + 3} {...letter}>E</text>
      <rect x={x - 13} y={y + 28} width="27" height="9" rx="2" fill={faint ? "#5d6167" : "#83878d"} />
      <text x={x - 4} y={y + 35} fontSize="6" fill={faint ? "#484c52" : "#e0e2e4"} textAnchor="middle">WCS</text>
    </g>
  );
}

function PlanView() {
  const ticks = Array.from({ length: 26 }, (_, i) => 233 + i * 8.3);
  const edge = (x) => {
    if (x < 300) return 189;
    if (x < 334) return 187 - ((x - 300) / 34) * 6;
    if (x < 369) return 181;
    if (x < 403) return 181 + ((x - 369) / 34) * 5;
    return 190;
  };
  return (
    <svg viewBox="127 103 380 228">
      <rect x="213.500" y="148.500" width="242" height="115.500" fill="none" stroke="#a1a43b" />
      <path d="M235 195H441V189L403 188 369 183 334 182 300 190 235 190zM235 210H441V217H235z" fill="#20263d" />
      <path d="M233.500 103v123M267.500 103v123" stroke="#2b72b8" strokeWidth="1.200" />
      <path d="M233.500 115v10M233.500 150v10M233.500 183v10" stroke="#d8b62e" strokeWidth="1.400" />
      <path d="M267.500 115v10M267.500 150v10M233.500 215v11M267.500 183v10M267.500 215v11" stroke="#9c6360" strokeWidth="1.600" />
      <path d="M232 113h3M232 147h3M232 180h3M232 214h3M266 113h3M266 147h3M266 180h3M266 214h3" stroke="#10151b" strokeWidth="3" />
      <path d="M233 135h34M233 169h34" stroke="#0b09d8" strokeWidth="2" />
      <path d="M233 171h34" stroke="#d80d3a" strokeWidth="1.500" />
      <path d="M220 103h6M274 103h6" stroke="#a3151b" />
      <Tag x={220} y={134.5} /><Tag x={273} y={134.5} />
      <Tag x={220} y={168} /><Tag x={273} y={168} />
      <Tag x={220} y={202} /><Tag x={446} y={202} />
      {ticks.map((x, i) => (
        <path key={i} d={`M${x} ${edge(x)}V${i % 2 ? 191 : 194}M${x} 211v${i % 2 ? 4 : 7}`} stroke="#1d9a3a" strokeWidth="1" />
      ))}
      <path d="M233 192l34-3 33 4h141M233 214h67l34 1 107 1" fill="none" stroke="#3b5a48" strokeWidth=".7" />
      <path d="M334 183v36M345 183v36M369 183v36M403 189v30M436 190v28" stroke="#1512a8" strokeWidth=".8" />
      <path d="M233 186l67 1 34-7.500 35 1 34 5.500 34 1.500h4M233 219.500l34 1 33-1 34 2 69-1 34-2.500h4" fill="none" stroke="#ecd11d" strokeWidth="1.500" />
      <path d="M233 186l34 .5M233 219.500l34 1 33-1M430 187.500h11M430 218h11" fill="none" stroke="#bd8a72" strokeWidth="2" />
      <path d="M233 195h208M233 210.500h208" stroke="#3fd8d5" strokeWidth="1.800" />
      <path d="M233 197h208M233 208.500h208" stroke="#d8141b" strokeWidth="1.800" />
      <path d="M233 202.500h208" stroke="#0d0ae0" strokeWidth="2" />
      <path d="M301 173.500v55" stroke="#fff" strokeWidth="2" />
      <path d="M300 202.500h3" stroke="#0d0ae0" strokeWidth="1.500" />
      <Compass x={478.5} y={130} faint />
    </svg>
  );
}

function RoadBody({ y }) {
  return (
    <g>
      <path d={`M694 ${y + 3.500}L770 ${y + 1} 845 ${y + 3.500}V${y + 14.500}L770 ${y + 13} 694 ${y + 14.500}z`} fill="#6b6468" stroke="#e8141b" strokeWidth="2" />
      <path d={`M695 ${y + 5}L770 ${y + 3} 844 ${y + 5}`} fill="none" stroke="#e8141b" strokeWidth="1.500" />
      <path d={`M697 ${y + 9}L770 ${y + 7} 842 ${y + 9}`} fill="none" stroke="#99999d" strokeWidth="1" />
      <path d={`M697 ${y + 11.500}h146`} stroke="#3c3c42" strokeWidth="1" strokeDasharray="1.500 1.500" />
      <path d={`M729 ${y + 9}h5M804 ${y + 9}h5`} stroke="#d8c92b" strokeWidth="1" />
    </g>
  );
}

function SectionsView() {
  return (
    <svg viewBox="511 105 374 223">
      <path d="M529.500 220v49M529.500 282v48" stroke="#b3151c" strokeWidth="1" />
      <path d="M528 245h3M528 306h3" stroke="#c71bb8" strokeWidth="2.500" />
      <path d="M609 182l6.500-16L622 182" fill="none" stroke="#14108f" strokeWidth="1.400" />
      {bars([
        [624, 156, 166], [624, 167, 177], [632, 161, 171], [660.5, 163, 179], [696.5, 150, 161], [713, 149, 160],
        [825, 151, 160], [841, 151, 160], [881, 166, 182], [785, 214, 224],
        [628, 300, 309], [628, 310, 319], [636, 304, 314], [656, 306, 322], [698, 290, 300], [714, 289, 299],
        [827, 290, 299], [843, 291, 300], [884, 308, 322],
      ])}
      {notes([[705, 170], [741, 170], [797, 170], [833, 170], [778, 235], [706, 310], [742, 309], [798, 309], [834, 310]])}
      <path d="M625 183l8 5h8l12 9h8l12-9h8l13-9M625 194l8-6M845 178l16 12h9l11 8h6M627 325l8 5M677 330l18-12M845 318l18 12" fill="none" stroke="#e8141b" strokeWidth="2" />
      <RoadBody y={175} />
      <RoadBody y={314.5} />
      <path d="M769.500 151v49M770.500 104v23M769.500 216v49M770.500 290v40" stroke="#b3151c" strokeWidth="1" />
      <path d="M768 175h3" stroke="#c71bb8" strokeWidth="2.500" />
      <path d="M770 241h16" stroke="#e8141b" strokeWidth="3" />
      <path d="M561 307h6l5-1v6h-11zM562 309.500h10" fill="none" stroke="#d8141b" strokeWidth="1.500" />
      <path d="M515.500 295v26M518 324h26M513 321h5v5h-5z" fill="none" stroke="#dfe1e3" />
      <path d="M516 285l4 4.500 4-4.500M520 289.500v4M546.500 315.500l7 7M553.500 315.500l-7 7" fill="none" stroke="#dfe1e3" />
      <path d="M775 103h112v21h-20v7h-92z" fill="#212830" />
      <path d="M775.500 103v28h46" fill="none" stroke="#aaa" />
      <path d="M776 107h101M776 111h110M776 115.500h83M776 120h110M776 124.500h90M776 129h45" stroke="#fff" strokeWidth="3.600" />
      <path d="M852 113.500h7M864 110h5v5h-5zM875.500 109.500l5 5M880.500 109.500l-5 5" fill="none" stroke="#111" strokeWidth="3" />
      <path d="M852 113.500h7M864 110h5v5h-5zM875.500 109.500l5 5M880.500 109.500l-5 5" fill="none" stroke="#f2f2f2" strokeWidth="1.300" />
      <Compass x={860} y={143.5} />
    </svg>
  );
}

const NavBar = styled.div`
  position: absolute;
  top: 91px;
  right: 1px;
  display: flex;
  flex-direction: column;
  align-items: center;
  justify-content: space-between;
  width: 18px;
  height: 121px;
  padding: 9px 0;
  border-radius: 2px;
  background: #a5a8ab;
`;

const NavButton = styled.button`
  display: grid;
  place-items: center;
  width: 16px;
  height: 16px;
  background: ${(p) => (p.$on ? "#7db2e0" : "none")};
`;

const ink = { fill: "none", stroke: "#3c4148", strokeWidth: 0.9 };

const navIcons = [
  <g {...ink}><path d="M1 13V6a6 6 0 1 1 6 7zM7 13h-6M6 19h2" /><circle cx="7" cy="7" r="4" /><circle cx="7" cy="7" r="2" /></g>,
  <g {...ink}><path d="M3 9L1 6c0-1 1-1 2 0l1 1L3 2c1-1 1 0 2 4V1c1-1 2 0 2 4l1-4c1 0 1 1 1 4l2-2c1 0 0 2-1 5l-2 5H5z" /></g>,
  <g {...ink}><path d="M1 1l12 12M12 1L1 12M0 3V0h3M10 0h3v3M0 10v3h3" /><circle cx="9" cy="9" r="2.500" fill="#a5a8ab" /></g>,
  <g {...ink}><path d="M7 0v14M5 2l2-2 2 2M5 12l2 2 2-2M3 5c-3 2-2 4 3 4M8 9c5 0 7-2 3-4M4 7l2 2-2 2" /></g>,
  <g><path d="M0 1h3v3H0zM5 1h3v3H5zM10 1h3v3h-3z" fill="#f4f4f4" /><path d="M1 6h11v7H1z" fill="#fff" stroke="#333" strokeWidth=".8" /><path d="M5 7.500l4 2-4 2z" fill="#333" /></g>,
];

function ProfileView() {
  return (
    <svg viewBox="127 333 760 228">
      <rect x="147" y="339" width="720" height="218" fill="none" stroke="#15129a" strokeWidth="1.200" />
      {bars([
        [353, 397, 407], [376.5, 412, 423], [408.5, 414, 432], [438, 407, 418], [456, 406, 418],
        [582, 407, 418], [600, 408, 418], [663.5, 438, 455], [695, 436, 446], [697, 437, 447],
      ])}
      {notes([[447, 429], [488, 428], [551, 428], [592, 429]])}
      {notes([[448, 430], [489, 429], [552, 429], [593, 430]])}
      <path d="M437 437l81-2.500 82 2.500 21 14-103-2-83 2z" fill="#6d6a70" />
      <path d="M450 439l68-3 70 3" fill="none" stroke="#8f9fd0" strokeWidth="2" />
      <path d="M440 443h165M440 446h170" stroke="#44444c" strokeDasharray="1.500 1.500" />
      <path d="M474 441h6M474 445.500h5M550 438h5M562 441h5M566 445.500h5" stroke="#1b1886" strokeWidth="1.200" />
      <path d="M353 426l24 16h9l14 9h8l13-9h11l5-5 81-2.500 82 2.500 40 27h11l12 10h10l13-10h11" fill="none" stroke="#e8141b" strokeWidth="2" />
      <path d="M437 437l-2 14 83-2 104 2" fill="none" stroke="#e8141b" strokeWidth="2" />
      <path d="M147 402L828 481h39" fill="none" stroke="#16a32c" strokeWidth="1.100" />
      <path d="M407 451h3M662 474h3M694 465.500h4M353 426h2" stroke="#3a18d8" strokeWidth="1.500" />
      <path d="M518.800 333v228" stroke="#a80f3c" strokeWidth="1.300" />
      <text transform="translate(662 438) rotate(-90)" fontSize="20" fill="#fff" fontFamily="DejaVu Sans, sans-serif">.50</text>
      <rect x="852" y="352" width="17" height="17" fill="#5d6167" />
      <text x="860" y="363" fontSize="5" fill="#484c52" textAnchor="middle">TOP</text>
      <path d="M840 370c12 2 30 2 42 0" fill="none" stroke="#3d434b" />
      <rect x="841" y="389" width="38" height="9" rx="2" fill="#5d6167" />
      <text x="857" y="396" fontSize="6" fill="#484c52" textAnchor="middle">Unnamed</text>
    </svg>
  );
}

const CommandWindow = styled.div`
  position: absolute;
  bottom: 0;
  left: 217px;
  right: 216px;
  display: grid;
  grid-template-columns: 13px 1fr;
  font-family: "DejaVu Sans Mono", monospace;
`;

const CommandGrip = styled.div`
  display: flex;
  flex-direction: column;
  align-items: center;
  background: #2a313b;
  border-top: 2px dotted #9aa0a8;
`;

const CommandText = styled.div`
  background: rgba(165, 166, 168, 0.94);
  color: #17191c;
`;

const CommandLog = styled.div`
  height: 26px;
  padding: 7px 0 0 1px;
  line-height: 9px;
  white-space: nowrap;
`;

const CommandPrompt = styled.label`
  display: flex;
  align-items: center;
  gap: 2px;
  height: 11px;
  padding: 0 2px;
  background: #c3c4c5;
  border-top: 1px solid #55585c;

  input {
    flex: 1;
    padding-left: 2px;
    font: italic 7px "DejaVu Sans Mono", monospace;
    outline: 0;
  }
  input::placeholder {
    color: #66696d;
  }
`;

function DrawingArea() {
  return (
    <Canvas>
      <Viewport>
        <PlanView />
      </Viewport>
      <Viewport $current>
        <SectionsView />
        <ViewLabel>[+][Top][2D Wireframe]</ViewLabel>
        <NavBar>
          {navIcons.map((art, i) => (
            <NavButton key={i} $on={i === 4} aria-label={`Navigation ${i + 1}`}>
              <Svg width="14" height="14" viewBox="0 0 14 14">{art}</Svg>
            </NavButton>
          ))}
        </NavBar>
      </Viewport>
      <Viewport $wide>
        <ProfileView />
        <CommandWindow>
          <CommandGrip>
            <Tool $h={19} aria-label="Close"><Icon name="close" size={7} /></Tool>
            <Tool $h={10} aria-label="Customize"><Icon name="wrench" size={9} /></Tool>
          </CommandGrip>
          <CommandText>
            <CommandLog>
              Command:
              <br />
              There are no out of date corridors available to rebuild.
            </CommandLog>
            <CommandPrompt>
              <Icon name="prompt" size={8} />
              <Svg width="4" height="4" viewBox="0 0 4 4"><path d="M0 1h4L2 4z" fill="#444" /></Svg>
              <input aria-label="Command" placeholder="Type a command" />
              <Svg width="4" height="4" viewBox="0 0 4 4"><path d="M0 3h4L2 0z" fill="#444" /></Svg>
            </CommandPrompt>
          </CommandText>
        </CommandWindow>
      </Viewport>
    </Canvas>
  );
}

/* ---------- status bar ---------- */

const StatusBar = styled.footer`
  display: flex;
  align-items: center;
  padding: 0 2px 0 8px;
  border-top: 2px solid #3a4250;
`;

const StatusCells = styled.div`
  display: flex;
  align-items: center;
  margin-left: auto;
  background: #313947;

  > button + button {
    border-left: 1px solid #2a313d;
  }
`;

function Status() {
  return (
    <StatusBar>
      <Tools items={[["menu", 14]]} />
      <FileTab $w={44} $active>Model</FileTab>
      <FileTab $w={28}>Layout1</FileTab>
      <Slash />
      <Tools items={[["plus", 20, 0, 8]]} />
      <Slash />
      <StatusCells>
        <Tool $w={119}>639276.0277, 308629.2256, 0.0000</Tool>
        <Tool $w={30}>MODEL</Tool>
        <Tools
          items={[
            ["snapGrid", 13], ["dots", 13], ["caret", 11], ["dyn", 15], ["ortho", 14, 1], ["polar", 13],
            ["caret", 10], ["iso", 12], ["caret", 11], ["angle", 13, 1], ["osnap", 13, 1], ["caret", 11],
            ["lines", 14, 1], ["annoStar", 15], ["annoStar", 13], ["anno", 13],
          ]}
        />
        <Tool $w={21}>1:500</Tool>
        <Tools items={[["caret", 9], ["gear", 14], ["caret", 10], ["plus", 15], ["units", 15], ["globe", 15]]} />
        <Tool $w={29}>3.5000</Tool>
        <Tools
          items={[
            ["tagBox", 15], ["caret", 9], ["tag", 13, 1], ["cubes", 14], ["chart", 15],
            ["caution", 14], ["square", 13, 0, 7], ["screen", 16], ["menu", 14],
          ]}
        />
      </StatusCells>
    </StatusBar>
  );
}

export default function App() {
  return (
    <>
      <GlobalStyle />
      <Page>
        <TopBar />
        <Ribbon />
        <FileTabs>
          <Tools items={[["menu", 14]]} />
          <Slash />
          <FileTab $w={27}>Start</FileTab>
          <FileTab $w={57} $active>
            00 Project* <Icon name="close" size={6} />
          </FileTab>
          <FileTab $w={40}>00 Teren</FileTab>
          <Slash />
          <Tools items={[["plus", 20, 0, 8]]} />
          <Slash />
        </FileTabs>
        <Main>
          <Strip $rows="1fr 1fr">
            <StripButton><Vertical>Layer Properties Manager</Vertical></StripButton>
            <StripButton><Vertical>External References</Vertical></StripButton>
          </Strip>
          <Toolspace />
          <SideTabs>
            {["Prospector", "Settings", "Survey", "Toolbox"].map((t, i) => (
              <SideTab key={t} $active={i === 0}><Vertical>{t}</Vertical></SideTab>
            ))}
          </SideTabs>
          <DrawingArea />
          <CommandStrip>
            {groups.map(([h, names], i) => (
              <StripGroup key={i} $h={h} $first={i === 0}>
                {names.map((n, j) => (
                  <Tool key={j} $w={12} $h={11} aria-label={n}><Icon name={n} size={9} /></Tool>
                ))}
              </StripGroup>
            ))}
          </CommandStrip>
          <SideTabs>
            {["Design", "Display", "Extended Data", "Object Class"].map((t, i) => (
              <SideTab key={t} $active={i === 0}><Vertical>{t}</Vertical></SideTab>
            ))}
          </SideTabs>
          <Properties />
          <Strip>
            <StripButton><Vertical>Tool Palettes - Civil Metric Subassemblies</Vertical></StripButton>
          </Strip>
        </Main>
        <Status />
      </Page>
    </>
  );
}
